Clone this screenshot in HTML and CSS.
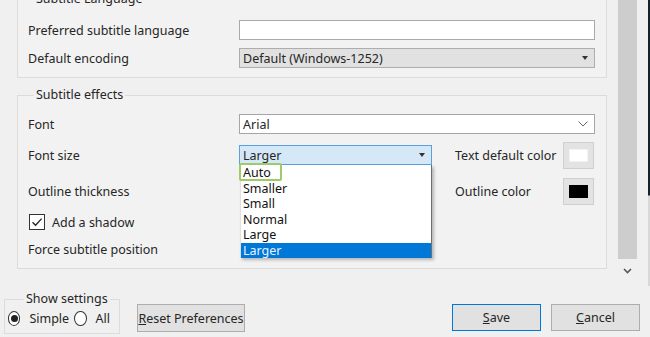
FILE: index.html
```html
<!DOCTYPE html>
<html>
<head>
<meta charset="utf-8">
<link rel="stylesheet" href="styles.css">
</head>
<body>
<div class="top">
  <div class="content">
    <fieldset class="group g1">
      <legend>Subtitle Language</legend>
      <div class="grid1">
        <span class="lbl">Preferred subtitle language</span>
        <div class="textbox"></div>
        <span class="lbl">Default encoding</span>
        <div class="combo gray"><span>Default (Windows-1252)</span><svg class="tri" width="6" height="4" viewBox="0 0 6 4"><path d="M0 0H6L3 4Z" fill="#333"/></svg></div>
      </div>
    </fieldset>
    <fieldset class="group g2">
      <legend>Subtitle effects</legend>
      <div class="grid2">
        <span class="lbl">Font</span>
        <div class="combo white wide"><span>Arial</span><svg class="chev" width="10" height="6" viewBox="0 0 10 6"><path d="M0.5 0.5L5 5L9.5 0.5" fill="none" stroke="#666" stroke-width="1"/></svg></div>
        <span class="lbl">Font size</span>
        <div class="fs-wrap">
          <div class="combo focus"><span>Larger</span><svg class="tri" width="6" height="4" viewBox="0 0 6 4"><path d="M0 0H6L3 4Z" fill="#333"/></svg></div>
          <ul class="list">
            <li>Auto</li>
            <li>Smaller</li>
            <li>Small</li>
            <li>Normal</li>
            <li>Large</li>
            <li class="sel">Larger</li>
          </ul>
          <div class="ring"></div>
        </div>
        <span class="lbl">Text default color</span>
        <div class="colorbtn"><span class="swatch sw-white"></span></div>
        <span class="lbl">Outline thickness</span>
        <span></span>
        <span class="lbl">Outline color</span>
        <div class="colorbtn"><span class="swatch sw-black"></span></div>
        <div class="check-row">
          <span class="checkbox"><svg width="14" height="14" viewBox="0 0 14 14"><path d="M2.5 7.2L5.6 10.2L11.6 3.6" fill="none" stroke="#222" stroke-width="1.3"/></svg></span>
          <span class="lbl">Add a shadow</span>
        </div>
        <span class="lbl full">Force subtitle position</span>
      </div>
    </fieldset>
  </div>
  <div class="scrollbar">
    <div class="thumb"></div>
    <svg class="down" width="9" height="6" viewBox="0 0 9 6"><path d="M1 1L4.5 4.5L8 1" fill="none" stroke="#555" stroke-width="1.6"/></svg>
  </div>
  <div class="edge"></div>
</div>
<div class="bottom">
  <fieldset class="group show">
    <legend>Show settings</legend>
    <div class="radios">
      <span class="radio on"></span><span class="rlbl">Simple</span>
      <span class="radio"></span><span class="rlbl">All</span>
    </div>
  </fieldset>
  <div class="btn reset"><u>R</u>eset Preferences</div>
  <div class="spacer"></div>
  <div class="btn save"><u>S</u>ave</div>
  <div class="btn cancel"><u>C</u>ancel</div>
</div>
</body>
</html>
```

FILE: styles.css
```css
html, body {
  margin: 0;
  padding: 0;
}
body {
  width: 650px;
  height: 337px;
  overflow: hidden;
  background: #f0f0f0;
  font-family: "Noto Sans", "Open Sans", sans-serif;
  font-size: 12.5px;
  color: #262626;
}
.top {
  display: flex;
  height: 286px;
  overflow: hidden;
}
.content {
  width: 608px;
  flex: none;
  box-sizing: border-box;
  padding-left: 17px;
  margin-top: -8px;
  display: flex;
  flex-direction: column;
}
.group {
  margin: 0;
  border: 1px solid #dcdcdc;
  background: #f2f2f2;
  box-sizing: border-box;
  min-width: 0;
}
.group legend {
  padding: 0 2px;
  margin-left: 6px;
  line-height: 14px;
  height: 14px;
}
.g1 {
  width: 590px;
  padding: 13px 11px 9px 10px;
}
.g2 {
  width: 590px;
  margin-top: 10px;
  padding: 8px 11px 4px 10px;
}
.lbl {
  white-space: nowrap;
  line-height: 16px;
  padding-top: 2px;
}
.grid1 {
  display: grid;
  grid-template-columns: 211px 1fr;
  grid-auto-rows: 20px;
  row-gap: 8px;
  align-items: center;
  padding-top: 1px;
}
.textbox {
  height: 20px;
  box-sizing: border-box;
  border: 1px solid #a9a9a9;
  background: #fff;
}
.combo {
  height: 20px;
  box-sizing: border-box;
  border: 1px solid #adadad;
  display: flex;
  align-items: center;
  justify-content: space-between;
  padding: 0 6px 0 3px;
  white-space: nowrap;
}
.combo.gray {
  background: #e1e1e1;
}
.combo.white {
  background: #fff;
  border-color: #a6a6a6;
}
.combo.focus {
  background: #d4e8f8;
  border-color: #5c9fdf;
  width: 193px;
}
.wide {
  grid-column: 2 / -1;
}
.grid2 {
  display: grid;
  grid-template-columns: 211px 216px 108px 32px;
  grid-template-rows: 28px 34px 38px 24px 30px;
  align-items: center;
}
.fs-wrap {
  position: relative;
  height: 20px;
}
.list {
  position: absolute;
  top: 20px;
  left: 1px;
  width: 192px;
  margin: 0;
  padding: 0;
  list-style: none;
  background: #fff;
  border-right: 1px solid #6f6f6f;
  border-left: 1px solid #e0e0e0;
  box-sizing: border-box;
  box-shadow: 2px 2px 3px rgba(0, 0, 0, 0.25);
  z-index: 2;
}
.list li {
  height: 15.5px;
  line-height: 15.5px;
  padding-left: 2px;
  color: #111;
}
.list li.sel {
  background: #0078d7;
  color: #e8f2ff;
}
.ring {
  position: absolute;
  top: 18px;
  left: 0;
  width: 43px;
  height: 18px;
  box-sizing: border-box;
  border: 2px solid #9ccb68;
  border-radius: 2px;
  z-index: 3;
}
.colorbtn {
  width: 31px;
  height: 27px;
  box-sizing: border-box;
  border: 1px solid #cfcfcf;
  background: #e3e3e3;
  display: flex;
  align-items: center;
  justify-content: center;
}
.swatch {
  width: 19px;
  height: 13px;
  box-sizing: border-box;
}
.sw-white {
  background: #fff;
  border: 1px solid #f2f2f2;
}
.sw-black {
  background: #000;
}
.check-row {
  grid-column: 1 / 3;
  display: flex;
  align-items: center;
  gap: 7px;
  padding-left: 1px;
}
.checkbox {
  width: 16px;
  height: 16px;
  box-sizing: border-box;
  border: 1px solid #333;
  background: #fff;
  display: flex;
  align-items: center;
  justify-content: center;
}
.full {
  grid-column: 1 / 3;
}
.scrollbar {
  width: 40px;
  flex: none;
  background: #f0f0f0;
}
.thumb {
  margin-left: 10px;
  width: 19px;
  height: 259px;
  background: #cdcdcd;
}
.down {
  display: block;
  margin: 9px 0 0 15px;
}
.edge {
  width: 2px;
  flex: none;
  background: linear-gradient(#15222e 0, #15222e 195px, #d8d8d8 196px);
}
.bottom {
  display: flex;
  align-items: flex-start;
  height: 51px;
}
.show {
  margin: 6px 0 0 4px;
  width: 116px;
  height: 42px;
  padding: 5px 4px 0 3px;
  background: #f0f0f0;
}
.show legend {
  margin-left: 16px;
}
.radios {
  display: flex;
  align-items: center;
  height: 15px;
}
.radio {
  width: 15px;
  height: 15px;
  box-sizing: border-box;
  border: 1px solid #333;
  border-radius: 50%;
  background: #fff;
  display: flex;
  align-items: center;
  justify-content: center;
}
.radio.on::after {
  content: "";
  width: 7px;
  height: 7px;
  border-radius: 50%;
  background: #222;
}
.rlbl {
  margin: 0 5px 0 9px;
}
.btn {
  height: 27px;
  box-sizing: border-box;
  border: 1px solid #adadad;
  background: #e1e1e1;
  display: flex;
  align-items: center;
  justify-content: center;
  white-space: nowrap;
  margin-top: 18px;
}
.reset {
  margin-left: 17px;
  width: 108px;
  height: 28px;
}
.spacer {
  flex: 1;
}
.save {
  width: 89px;
  border-color: #0078d7;
}
.cancel {
  width: 89px;
  margin-left: 10px;
  margin-right: 10px;
}
```
